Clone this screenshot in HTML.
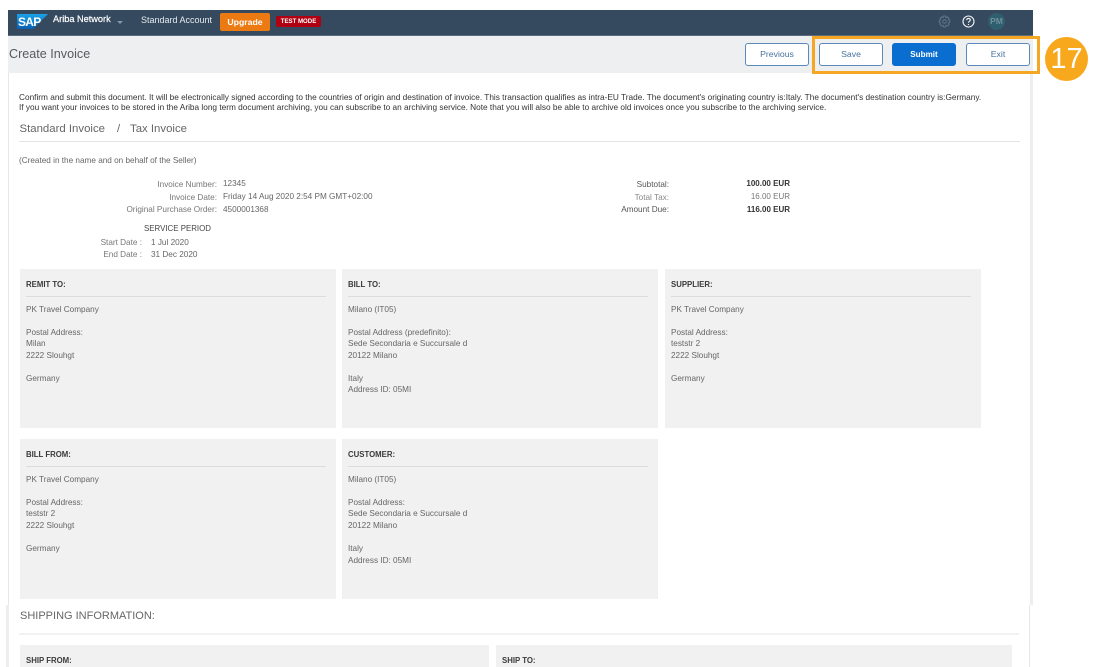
<!DOCTYPE html>
<html><head><meta charset="utf-8"><style>
html,body{margin:0;padding:0;background:#fff}
body{width:1097px;height:667px;position:relative;overflow:hidden;font-family:"Liberation Sans",sans-serif;color:#555}
.a{position:absolute}
.t{position:absolute;white-space:nowrap;font-size:8.2px;line-height:11px;color:#666}
.r{text-align:right}
.box{position:absolute;background:#f1f1f1}
.hd{position:absolute;left:6px;top:10px;font-size:7.8px;line-height:11px;color:#3a3a3a;font-weight:bold;white-space:nowrap}
.ln{position:absolute;left:6px;height:1px;background:#dcdcdc}
.btn{position:absolute;top:43px;height:23px;width:64px;box-sizing:border-box;border:1px solid #5a89bb;border-radius:3px;background:#fff;color:#47719f;font-size:8.7px;line-height:21px;text-align:center}
</style></head><body>
<div class="a" style="left:8px;top:10px;width:1025px;height:26px;background:#354a5f"></div>
<div class="a" style="left:8px;top:35px;width:1025px;height:1px;background:#5c6c7c"></div>
<div class="a" style="left:8px;top:36px;width:1025px;height:37px;background:#edeff0"></div>
<div class="a" style="left:8px;top:73px;width:1px;height:532px;background:#e6e7e9"></div>
<div class="a" style="left:1030px;top:73px;width:3px;height:532px;background:#edeef0"></div>
<div class="a" style="left:6px;top:605px;width:3px;height:62px;background:#edeef0"></div>
<div class="a" style="left:1029px;top:605px;width:1px;height:62px;background:#e6e7e9"></div>

<svg class="a" style="left:17px;top:14px" width="31" height="15" viewBox="0 0 31 15"><defs><linearGradient id="g" x1="0" y1="0" x2="0" y2="1"><stop offset="0" stop-color="#1aa3e8"/><stop offset="1" stop-color="#0a5fb4"/></linearGradient></defs><path d="M0 0H31L16 15H0Z" fill="url(#g)"/><text x="1" y="12" font-family="Liberation Sans" font-size="12" font-weight="bold" fill="#fff" letter-spacing="-.7">SAP</text></svg>
<div class="t" style="left:53px;top:14px;font-size:9.2px;color:#fff;font-weight:normal;-webkit-text-stroke:.2px #fff">Ariba Network</div>
<div class="a" style="left:117px;top:21px;width:0;height:0;border-left:3px solid transparent;border-right:3px solid transparent;border-top:3px solid #8696a6"></div>
<div class="t" style="left:141px;top:15px;font-size:9px;color:#e6eaee">Standard Account</div>
<div class="a" style="left:220px;top:13px;width:50px;height:18px;background:#ec7a12;border-radius:2px;color:#fff;font-size:8.7px;line-height:18px;text-align:center;font-weight:bold">Upgrade</div>
<div class="a" style="left:276px;top:16px;width:45px;height:11px;background:#b00011;border-radius:2px;color:#fff;font-size:6.1px;line-height:11px;text-align:center;font-weight:bold">TEST MODE</div>

<svg class="a" style="left:938px;top:15px" width="13" height="13" viewBox="0 0 13 13" fill="none" stroke="#5f7183" stroke-width="1.1"><circle cx="6.5" cy="6.5" r="1.8"/><path d="M5.5 1H7.5L7.9 2.5L9.4 1.9L10.9 3.4L10.2 4.8L11.8 5.4V7.5L10.3 8L11 9.5L9.5 11L8 10.3L7.5 11.9H5.5L5 10.3L3.5 11L2 9.5L2.7 8L1.2 7.5V5.4L2.8 4.8L2.1 3.4L3.6 1.9L5.1 2.5Z"/></svg>
<svg class="a" style="left:962px;top:15px" width="13" height="13" viewBox="0 0 13 13" fill="none" stroke="#f2f4f6" stroke-width="1.1"><circle cx="6.5" cy="6.5" r="5.5"/><path d="M4.7 5.1C4.8 2.9 8.3 3 8.3 5C8.3 6.4 6.5 6.3 6.5 7.8"/><path d="M6.5 9V10" stroke-width="1.2"/></svg>
<div class="a" style="left:988px;top:13px;width:17px;height:17px;border-radius:50%;background:#2f5f6e;color:#6f8e9c;font-size:8.5px;line-height:17px;text-align:center;font-weight:bold">PM</div>

<div class="t" style="left:9px;top:46px;font-size:12.6px;line-height:16px;color:#565a5e">Create Invoice</div>
<div class="btn" style="left:745px">Previous</div>
<div class="btn" style="left:819px">Save</div>
<div class="btn" style="left:892px;background:#0a6ed1;border-color:#0a6ed1;color:#fff;font-weight:bold;font-size:8.1px">Submit</div>
<div class="btn" style="left:966px">Exit</div>
<div class="a" style="left:812px;top:36px;width:228px;height:38px;box-sizing:border-box;border:3px solid #f5a623"></div>
<div class="a" style="left:1045px;top:37px;width:43px;height:44px;border-radius:50%;background:#f8a81c;color:#fff;font-size:29px;line-height:44px;text-align:center">17</div>

<div class="t" style="left:19px;top:92px;color:#333;font-size:8.27px">Confirm and submit this document. It will be electronically signed according to the countries of origin and destination of invoice. This transaction qualifies as intra-EU Trade. The document's originating country is:Italy. The document's destination country is:Germany.</div>
<div class="t" style="left:19px;top:102px;color:#333;font-size:8.28px">If you want your invoices to be stored in the Ariba long term document archiving, you can subscribe to an archiving service. Note that you will also be able to archive old invoices once you subscribe to the archiving service.</div>
<div class="t" style="left:19.5px;top:122px;font-size:11.4px;line-height:15px;color:#666">Standard Invoice</div>
<div class="t" style="left:117px;top:122px;font-size:11.4px;line-height:15px;color:#666">/</div>
<div class="t" style="left:130px;top:122px;font-size:11.4px;line-height:15px;color:#666">Tax Invoice</div>
<div class="a" style="left:19px;top:141px;width:1001px;height:1px;background:#e4e4e4"></div>

<div class="t" style="left:19px;top:155px">(Created in the name and on behalf of the Seller)</div>
<div class="t r" style="left:70px;width:147px;top:179px;color:#777">Invoice Number:</div><div class="t" style="left:223px;top:178px">12345</div>
<div class="t r" style="left:70px;width:147px;top:192px;color:#777">Invoice Date:</div><div class="t" style="left:223px;top:191px">Friday 14 Aug 2020 2:54 PM GMT+02:00</div>
<div class="t r" style="left:70px;width:147px;top:204px;color:#777">Original Purchase Order:</div><div class="t" style="left:223px;top:204px">4500001368</div>
<div class="t" style="left:144px;top:223px;color:#444;font-size:7.9px">SERVICE PERIOD</div>
<div class="t r" style="left:70px;width:72px;top:237px;color:#777">Start Date :</div><div class="t" style="left:151px;top:237px">1 Jul 2020</div>
<div class="t r" style="left:70px;width:72px;top:249px;color:#777">End Date :</div><div class="t" style="left:151px;top:249px">31 Dec 2020</div>

<div class="t r" style="left:600px;width:69px;top:179px;color:#555">Subtotal:</div><div class="t r" style="left:700px;width:90px;top:178px;color:#333;font-weight:bold;font-size:8px">100.00 EUR</div>
<div class="t r" style="left:600px;width:69px;top:192px;color:#888">Total Tax:</div><div class="t r" style="left:700px;width:90px;top:191px;color:#777;font-size:8px">16.00 EUR</div>
<div class="t r" style="left:600px;width:69px;top:204px;color:#555">Amount Due:</div><div class="t r" style="left:700px;width:90px;top:204px;color:#333;font-weight:bold;font-size:8px">116.00 EUR</div>

<div class="box" style="left:20px;top:269px;width:316px;height:159px"><div class="hd">REMIT TO:</div><div class="ln" style="width:300px;top:27px"></div>
<div class="t" style="left:6px;top:35px">PK Travel Company</div><div class="t" style="left:6px;top:58px">Postal Address:</div><div class="t" style="left:6px;top:69px">Milan</div><div class="t" style="left:6px;top:81px">2222 Slouhgt</div><div class="t" style="left:6px;top:104px">Germany</div></div>

<div class="box" style="left:342px;top:269px;width:316px;height:159px"><div class="hd">BILL TO:</div><div class="ln" style="width:300px;top:27px"></div>
<div class="t" style="left:6px;top:35px">Milano (IT05)</div><div class="t" style="left:6px;top:58px">Postal Address (predefinito):</div><div class="t" style="left:6px;top:69px">Sede Secondaria e Succursale d</div><div class="t" style="left:6px;top:81px">20122 Milano</div><div class="t" style="left:6px;top:104px">Italy</div><div class="t" style="left:6px;top:115px">Address ID: 05MI</div></div>

<div class="box" style="left:665px;top:269px;width:316px;height:159px"><div class="hd">SUPPLIER:</div><div class="ln" style="width:300px;top:27px"></div>
<div class="t" style="left:6px;top:35px">PK Travel Company</div><div class="t" style="left:6px;top:58px">Postal Address:</div><div class="t" style="left:6px;top:69px">teststr 2</div><div class="t" style="left:6px;top:81px">2222 Slouhgt</div><div class="t" style="left:6px;top:104px">Germany</div></div>

<div class="box" style="left:20px;top:439px;width:316px;height:160px"><div class="hd">BILL FROM:</div><div class="ln" style="width:300px;top:27px"></div>
<div class="t" style="left:6px;top:35px">PK Travel Company</div><div class="t" style="left:6px;top:58px">Postal Address:</div><div class="t" style="left:6px;top:69px">teststr 2</div><div class="t" style="left:6px;top:81px">2222 Slouhgt</div><div class="t" style="left:6px;top:104px">Germany</div></div>

<div class="box" style="left:342px;top:439px;width:316px;height:160px"><div class="hd">CUSTOMER:</div><div class="ln" style="width:300px;top:27px"></div>
<div class="t" style="left:6px;top:35px">Milano (IT05)</div><div class="t" style="left:6px;top:58px">Postal Address:</div><div class="t" style="left:6px;top:69px">Sede Secondaria e Succursale d</div><div class="t" style="left:6px;top:81px">20122 Milano</div><div class="t" style="left:6px;top:104px">Italy</div><div class="t" style="left:6px;top:116px">Address ID: 05MI</div></div>

<div class="t" style="left:20px;top:608px;font-size:11px;line-height:16px;color:#666">SHIPPING INFORMATION:</div>
<div class="a" style="left:19px;top:633px;width:1000px;height:2px;background:#f2f2f2"></div>
<div class="box" style="left:20px;top:645px;width:469px;height:22px;overflow:hidden"><div class="hd" style="top:10px">SHIP FROM:</div></div>
<div class="box" style="left:496px;top:645px;width:516px;height:22px;overflow:hidden"><div class="hd" style="top:10px">SHIP TO:</div></div>
</body></html>
